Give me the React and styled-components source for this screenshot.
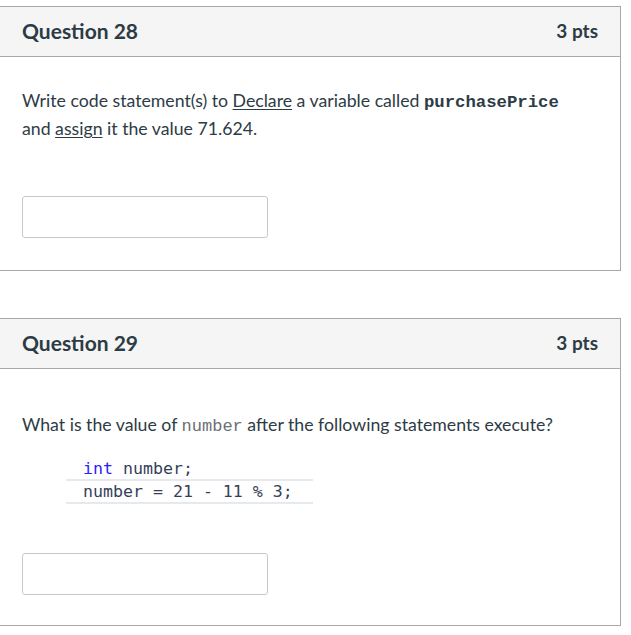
import React from "react";
import styled, { createGlobalStyle } from "styled-components";

const GlobalStyle = createGlobalStyle`
  body {
    margin: 0;
    background: #ffffff;
    font-family: Lato, "Open Sans", sans-serif;
    color: #2d3b45;
  }
`;

const Page = styled.div`
  display: flex;
  flex-direction: column;
  gap: 47px;
  padding-top: 6px;
  width: 631px;
`;

const Card = styled.div`
  width: 620px;
  margin-left: -1px;
  border: 1px solid #a9a9a9;
  background: #ffffff;
`;

const Header = styled.div`
  display: flex;
  justify-content: space-between;
  align-items: center;
  height: 50px;
  padding: 0 22px 2px 22px;
  box-sizing: border-box;
  background: #f5f5f5;
  border-bottom: 1px solid #a9a9a9;
`;

const Title = styled.div`
  font-size: 21px;
  font-weight: 700;
  color: #2d3b45;
`;

const Points = styled.div`
  font-size: 19px;
  font-weight: 700;
  color: #2d3b45;
`;

const Body = styled.div`
  padding: ${(p) => p.$top}px 22px ${(p) => p.$bottom}px 22px;
`;

const Text = styled.p`
  margin: 0;
  max-width: 560px;
  font-size: 17.7px;
  line-height: 26px;
  color: #2d3b45;
`;

const Link = styled.span`
  text-decoration: underline;
  text-underline-offset: 2px;
`;

const BoldCode = styled.code`
  font-family: "Liberation Mono", "Courier New", monospace;
  font-weight: 700;
  font-size: 17.3px;
  color: #2d3b45;
`;

const InlineCode = styled.code`
  font-family: "Liberation Mono", "Courier New", monospace;
  font-size: 17px;
  color: #6a7076;
`;

const CodeBlock = styled.div`
  display: flex;
  flex-direction: column;
  width: 247px;
  margin: 18px 0 0 44px;
`;

const CodeLine = styled.div`
  padding-left: 17px;
  height: 21px;
  line-height: 21px;
  font-family: "DejaVu Sans Mono", Consolas, monospace;
  font-size: 16.6px;
  color: #34405a;
  white-space: pre;
  border-top: ${(p) => (p.$ruled ? "2px solid #e6e9ee" : "none")};
  border-bottom: ${(p) => (p.$ruled ? "2px solid #e6e9ee" : "none")};
`;

const Keyword = styled.span`
  color: #2b1cff;
`;

const AnswerInput = styled.div`
  width: 244px;
  height: 40px;
  border: 1px solid #c8c8c8;
  border-radius: 3px;
  background: #ffffff;
  margin-top: ${(p) => p.$gap}px;
`;

export default function App() {
  return (
    <>
      <GlobalStyle />
      <Page>
        <Card>
          <Header>
            <Title>Question 28</Title>
            <Points>3 pts</Points>
          </Header>
          <Body $top={31} $bottom={32}>
            <Text>
              Write code statement(s) to <Link>Declare</Link> a variable called{" "}
              <BoldCode>purchasePrice</BoldCode> and <Link>assign</Link> it the value
              71.624.
            </Text>
            <AnswerInput $gap={54} />
          </Body>
        </Card>
        <Card>
          <Header>
            <Title>Question 29</Title>
            <Points>3 pts</Points>
          </Header>
          <Body $top={43} $bottom={30}>
            <Text>
              What is the value of <InlineCode>number</InlineCode> after the following
              statements execute?
            </Text>
            <CodeBlock>
              <CodeLine>
                <Keyword>int</Keyword> number;
              </CodeLine>
              <CodeLine $ruled>number = 21 - 11 % 3;</CodeLine>
            </CodeBlock>
            <AnswerInput $gap={49} />
          </Body>
        </Card>
      </Page>
    </>
  );
}
